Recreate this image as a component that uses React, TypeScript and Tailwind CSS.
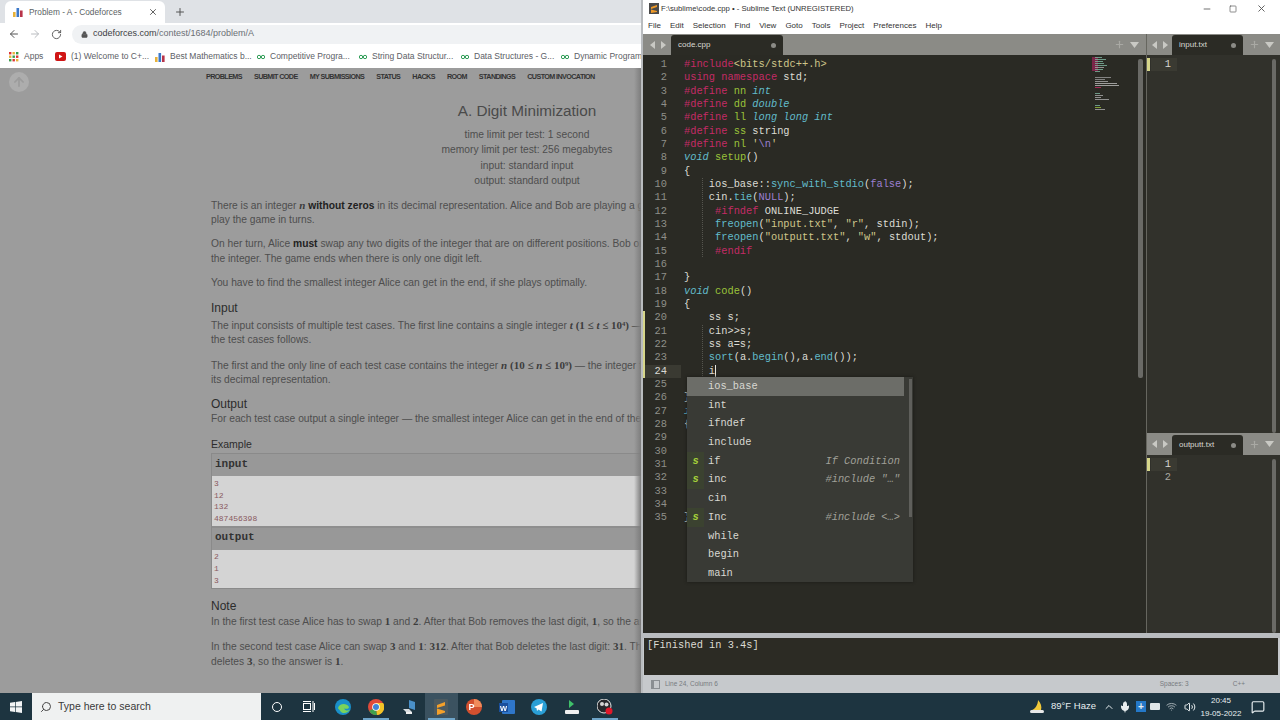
import React from "react";
import { ArrowLeft, ArrowRight, RotateCw, Lock, Plus, X, Minus, Square, Search, ChevronUp, Mic, Volume2, Wifi, MessageSquare, ArrowUp } from "lucide-react";

const P = "text-[#c42a66]";
const G = "text-[#9ac23a]";
const C = "text-[#62bccb] italic";
const F = "text-[#62bccb]";
const W = "text-[#dcdcd4]";
const Y = "text-[#cfc68a]";
const V = "text-[#9a7fd0]";

type T = [string, string];
const code: T[][] = [
  [["#include", P], ["<bits/stdc++.h>", Y]],
  [["using namespace", P], [" std;", W]],
  [["#define ", P], ["nn ", G], ["int", C]],
  [["#define ", P], ["dd ", G], ["double", C]],
  [["#define ", P], ["ll ", G], ["long long int", C]],
  [["#define ", P], ["ss ", G], ["string", W]],
  [["#define ", P], ["nl ", G], ["'", Y], ["\\n", V], ["'", Y]],
  [["void", C], [" setup", G], ["()", W]],
  [["{", W]],
  [["    ios_base::", W], ["sync_with_stdio", F], ["(", W], ["false", V], [");", W]],
  [["    cin.", W], ["tie", F], ["(", W], ["NULL", V], [");", W]],
  [["     #ifndef", P], [" ONLINE_JUDGE", W]],
  [["     ", W], ["freopen", F], ["(", W], ['"input.txt"', Y], [", ", W], ['"r"', Y], [", stdin);", W]],
  [["     ", W], ["freopen", F], ["(", W], ['"outputt.txt"', Y], [", ", W], ['"w"', Y], [", stdout);", W]],
  [["     #endif", P]],
  [],
  [["}", W]],
  [["void", C], [" code", G], ["()", W]],
  [["{", W]],
  [["    ss s;", W]],
  [["    cin>>s;", W]],
  [["    ss a=s;", W]],
  [["    ", W], ["sort", F], ["(a.", W], ["begin", F], ["(),a.", W], ["end", F], ["());", W]],
  [["    i", W]],
  [],
  [["}", W]],
  [["int", C], [" main()", W]],
  [["{", W]],
  [],
  [],
  [],
  [],
  [],
  [],
  [["}", W]],
];

const suggestions: [string, string, string][] = [
  ["ios_base", "", ""],
  ["int", "", ""],
  ["ifndef", "", ""],
  ["include", "", ""],
  ["if", "If Condition", "s"],
  ["inc", '#include "…"', "s"],
  ["cin", "", ""],
  ["Inc", "#include <…>", "s"],
  ["while", "", ""],
  ["begin", "", ""],
  ["main", "", ""],
];

const Arrows = () => (
  <svg width="16" height="8" viewBox="0 0 16 8" className="shrink-0">
    <path d="M5 0v8L0 4z M11 0v8l5-4z" fill="#c9c9c4" />
  </svg>
);

const TabEnd = () => (
  <div className="flex items-center gap-[5px] shrink-0">
    <Plus size={11} strokeWidth={2.5} className="text-[#a9a9a4]" />
    <svg width="9" height="6" viewBox="0 0 9 6"><path d="M0 0h9L4.500 6z" fill="#c9c9c4" /></svg>
  </div>
);

const Tab = ({ label, w }: { label: string; w: string }) => (
  <div className={`h-[20px] self-end rounded-t-[3px] bg-[#2b2b25] flex items-center justify-between pl-[7px] pr-[7px] text-[8px] text-[#d8d8d2] ${w}`}>
    <span>{label}</span>
    <span className="w-[5px] h-[5px] rounded-full bg-[#8b8b86]" />
  </div>
);

const Sans = "font-['Liberation_Sans',Arial,sans-serif]";

const L = ({ children }: { children: React.ReactNode }) => (
  <div className="h-[14.5px] leading-[14.5px] whitespace-nowrap">{children}</div>
);
const M = ({ children }: { children: React.ReactNode }) => (
  <span className="font-['Liberation_Serif',serif] font-bold italic text-[#3c3c3c] text-[11px]">{children}</span>
);
const N = ({ children }: { children: React.ReactNode }) => (
  <span className="font-['Liberation_Serif',serif] font-bold text-[#3c3c3c] text-[11px]">{children}</span>
);
const H = ({ children, className }: { children: React.ReactNode; className: string }) => (
  <div className={`h-[16px] leading-[16px] text-[12px] font-medium text-[#2c2c2c] ${className}`}>{children}</div>
);

const Mark = ({ color }: { color: string }) => (
  <svg width="8" height="8" viewBox="0 0 8 8" className="shrink-0">
    <circle cx="2" cy="4" r="1.700" fill="none" stroke={color} strokeWidth="1" />
    <circle cx="6" cy="4" r="1.700" fill="none" stroke={color} strokeWidth="1" />
  </svg>
);

const Bars = () => (
  <svg width="10" height="10" viewBox="0 0 10 10" className="shrink-0">
    <rect x="0" y="5" width="2.600" height="5" fill="#e8b23a" />
    <rect x="3.500" y="1" width="2.600" height="9" fill="#3b78c9" />
    <rect x="7" y="3.500" width="2.600" height="6.500" fill="#b8344a" />
  </svg>
);

const Bookmark = ({ icon, text, w }: { icon: React.ReactNode; text: string; w: string }) => (
  <div className={`flex items-center gap-[5px] shrink-0 ${w}`}>
    {icon}
    <span className="whitespace-nowrap text-[8.500px] text-[#5c6066]">{text}</span>
  </div>
);

function Chrome() {
  return (
    <div className={`w-[641px] h-full flex flex-col overflow-hidden relative bg-[#9c9c9c] ${Sans}`}>
      <div className="h-[23px] bg-[#dfe2e6] flex items-end pl-[5px] shrink-0">
        <div className="w-[160px] h-[22px] bg-white rounded-t-[6px] flex items-center pl-[8px] pr-[7px] gap-[6px]">
          <Bars />
          <span className="text-[8.300px] text-[#5c5f64] flex-1 whitespace-nowrap">Problem - A - Codeforces</span>
          <X size={10} className="text-[#444]" />
        </div>
        <Plus size={12} className="text-[#555] ml-[9px] mb-[5px]" />
      </div>
      <div className="h-[22px] bg-white flex items-center pl-[8px] shrink-0">
        <ArrowLeft size={12} className="text-[#555]" />
        <ArrowRight size={12} className="text-[#b9bcc0] ml-[9px]" />
        <RotateCw size={11} className="text-[#555] ml-[10px]" />
        <div className="ml-[10px] flex-1 h-[19px] bg-[#f0f2f4] rounded-l-full flex items-center pl-[9px] gap-[5px]">
          <Lock size={7} fill="#555" className="text-[#555]" />
          <span className="text-[9px] text-[#3c4043]">codeforces.com<span className="text-[#6b6f74]">/contest/1684/problem/A</span></span>
        </div>
      </div>
      <div className="h-[23px] bg-white flex items-center pl-[9px] shrink-0 overflow-hidden">
        <Bookmark
          w="w-[46px]"
          icon={
            <svg width="10" height="10" viewBox="0 0 10 10" className="shrink-0">
              {[0, 1, 2].flatMap((r) =>
                [0, 1, 2].map((c) => (
                  <rect key={`${r}${c}`} x={c * 3.500} y={r * 3.500} width="2.400" height="2.400" fill={["#d33", "#e8b23a", "#3a9a4a"][(r + c) % 3]} />
                ))
              )}
            </svg>
          }
          text="Apps"
        />
        <Bookmark
          w="w-[100px]"
          icon={
            <svg width="11" height="9" viewBox="0 0 11 9" className="shrink-0">
              <rect width="11" height="9" rx="2" fill="#d01515" />
              <path d="M4 2.500v4l3.500-2z" fill="#fff" />
            </svg>
          }
          text="(1) Welcome to C+..."
        />
        <Bookmark w="w-[102px]" icon={<Bars />} text="Best Mathematics b..." />
        <Bookmark w="w-[102px]" icon={<Mark color="#2f9e57" />} text="Competitive Progra..." />
        <Bookmark w="w-[102px]" icon={<Mark color="#2f9e57" />} text="String Data Structur..." />
        <Bookmark w="w-[100px]" icon={<Mark color="#2f9e57" />} text="Data Structures - G..." />
        <Bookmark w="w-[100px]" icon={<Mark color="#2f9e57" />} text="Dynamic Programming" />
      </div>

      <div className="flex-1 text-[10.250px] text-[#4e4e4e] relative">
        <div className="absolute left-[9px] top-[4px] w-[20px] h-[20px] rounded-full bg-[#adadad] flex items-center justify-center">
          <ArrowUp size={14} strokeWidth={3} className="text-[#9c9c9c]" />
        </div>
        <div className="h-[18px] pl-[206px] flex items-center gap-[12px] text-[7.200px] tracking-[-0.6px] font-bold text-[#333] whitespace-nowrap">
          {["PROBLEMS", "SUBMIT CODE", "MY SUBMISSIONS", "STATUS", "HACKS", "ROOM", "STANDINGS", "CUSTOM INVOCATION"].map((x) => (
            <span key={x}>{x}</span>
          ))}
        </div>
        <div className="ml-[211px] w-[632px]">
          <div className="mt-[13px] h-[24px] leading-[24px] text-center text-[15.300px] text-[#4a4a4a]">A. Digit Minimization</div>
          <div className="mt-[3.500px] text-center">
            {["time limit per test: 1 second", "memory limit per test: 256 megabytes", "input: standard input", "output: standard output"].map((x) => (
              <div key={x} className="h-[15.500px] leading-[15.500px]">{x}</div>
            ))}
          </div>
          <div className="mt-[9.500px]">
            <L>There is an integer <M>n</M> <b className="text-[#222]">without zeros</b> in its decimal representation. Alice and Bob are playing a game with this integer. They</L>
            <L>play the game in turns.</L>
          </div>
          <div className="mt-[10px]">
            <L>On her turn, Alice <b className="text-[#222]">must</b> swap any two digits of the integer that are on different positions. Bob on his turn always removes the last digit of</L>
            <L>the integer. The game ends when there is only one digit left.</L>
          </div>
          <div className="mt-[10px]">
            <L>You have to find the smallest integer Alice can get in the end, if she plays optimally.</L>
          </div>
          <H className="mt-[9.500px]">Input</H>
          <div className="mt-[2px]">
            <L>The input consists of multiple test cases. The first line contains a single integer <M>t</M> <N>(1 ≤ <i>t</i> ≤ 10⁴)</N> — the number of test cases. Description of</L>
            <L>the test cases follows.</L>
          </div>
          <div className="mt-[11px]">
            <L>The first and the only line of each test case contains the integer <M>n</M> <N>(10 ≤ <i>n</i> ≤ 10⁹)</N> — the integer for the game. <M>n</M> does not have zeros in</L>
            <L>its decimal representation.</L>
          </div>
          <H className="mt-[9px]">Output</H>
          <L>For each test case output a single integer — the smallest integer Alice can get in the end of the game.</L>
          <H className="mt-[9.500px] !text-[10.500px]">Example</H>
          <div className="mt-[1px] border border-[#8a8a8a] font-['Liberation_Mono',monospace]">
            <div className="h-[22px] leading-[20px] bg-[#989898] pl-[3px] text-[11px] font-bold text-[#333]">input</div>
            <div className="h-[50px] bg-[#d4d4d4] pl-[2px] pt-[2px] text-[8px] leading-[11.700px] text-[#8a5a60]">
              <div>3</div><div>12</div><div>132</div><div>487456398</div>
            </div>
            <div className="h-[2px] bg-[#8e8e8e]" />
            <div className="h-[22px] leading-[19px] bg-[#989898] pl-[3px] text-[11px] font-bold text-[#333]">output</div>
            <div className="h-[38px] bg-[#d4d4d4] pl-[2px] pt-[1px] text-[8px] leading-[12px] text-[#8a5a60]">
              <div>2</div><div>1</div><div>3</div>
            </div>
          </div>
          <H className="mt-[9px]">Note</H>
          <L>In the first test case Alice has to swap <N>1</N> and <N>2</N>. After that Bob removes the last digit, <N>1</N>, so the answer is <N>2</N>.</L>
          <div className="mt-[10.500px]">
            <L>In the second test case Alice can swap <N>3</N> and <N>1</N>: <N>312</N>. After that Bob deletes the last digit: <N>31</N>. Then Alice swaps <N>3</N> and <N>1</N>: <N>13</N> and Bob</L>
            <L>deletes <N>3</N>, so the answer is <N>1</N>.</L>
          </div>
        </div>
      </div>
      <div className="absolute right-0 top-[68px] bottom-0 w-[7px] bg-gradient-to-r from-transparent to-[#7d7d7d]" />
    </div>
  );
}

function Editor() {
  return (
    <div className="flex-1 relative bg-[#2a2a24] overflow-hidden pt-[3px] font-['Liberation_Mono',monospace] text-[10.350px]">
      {code.map((line, i) => {
        const n = i + 1;
        const active = n === 24;
        return (
          <div key={n} className="h-[13.340px] leading-[13.340px] flex relative whitespace-pre">
            {n >= 20 && n <= 24 && <div className="absolute left-0 top-0 bottom-0 w-[2px] bg-[#d6d68a]" />}
            <div className={`w-[38px] shrink-0 pr-[14px] text-right ${active ? "bg-[#3a3a32] text-[#d8d8d2]" : "text-[#8e8f89]"}`}>{n}</div>
            <div className="pl-[3px]">
              {line.map(([t, c], j) => (
                <span key={j} className={c}>{t}</span>
              ))}
              {active && <span className="inline-block w-[1px] h-[12px] bg-[#e8e8e0] align-middle" />}
            </div>
          </div>
        );
      })}
      <div className="absolute left-[59px] top-[123px] h-[79px] border-l border-dotted border-[#55554e]" />
      <div className="absolute left-[59px] top-[270px] h-[65px] border-l border-dotted border-[#55554e]" />

      {/* minimap */}
      <div className="absolute left-[449px] top-[2px] w-[6px] h-[14px] bg-[#7a2548]" />
      <div className="absolute left-[452px] top-[2px] w-[26px] flex flex-col gap-[1px] opacity-80">
        {[[1,7,"#7fb5a0"],[1,11,"#7fb5a0"],[1,8,"#7fb5a0"],[1,9,"#7fb5a0"],[1,12,"#7fb5a0"],[1,9,"#aaa"],[1,8,"#7fb5a0"],[1,5,"#7fb5a0"],[3,0,""],[1,16,"#999"],[1,10,"#999"],[1,13,"#aaa"],[1,22,"#bbb"],[1,24,"#bbb"],[1,6,"#c42a66"],[3,0,""],[1,5,"#7fb5a0"],[1,8,"#aaa"],[1,6,"#aaa"],[1,14,"#aaa"],[3,0,""],[1,5,"#7fb5a0"],[1,6,"#9ac23a"],[1,10,"#aaa"]].map(([h, w, c], i) => (
          <div key={i} style={{ height: Number(h), width: Number(w), background: String(c) }} />
        ))}
      </div>
      {/* scrollbar */}
      <div className="absolute left-[495px] top-[4px] w-[5px] h-[319px] rounded-[2px] bg-[#6a6a66]" />

      {/* autocomplete */}
      <div className="absolute left-[44px] top-[322px] w-[226px] h-[205px] bg-[#393a35] shadow-[0_0_3px_#1a1a16]">
        <div className="absolute right-[1px] top-[2px] w-[3px] h-[138px] bg-[#5f5f5b]" />
        {suggestions.map(([name, hint, s], i) => (
          <div key={name} className={`h-[18.700px] leading-[18.700px] w-[217px] flex items-center pl-[21px] relative whitespace-pre text-[#d8d8d2] ${i === 0 ? "bg-[#6c6d68]" : ""}`}>
            {s && (
              <span className="absolute left-0 top-0 bottom-0 w-[17px] bg-[#3b4230] text-center text-[#a6d33a] font-bold italic">s</span>
            )}
            <span className="flex-1">{name}</span>
            {hint && <span className="italic text-[#a0a098] pr-[4px]">{hint}</span>}
          </div>
        ))}
      </div>
    </div>
  );
}

const SidePane = ({ lines, className }: { lines: number; className: string }) => (
  <div className={`relative bg-[#31312b] pt-[3px] font-['Liberation_Mono',monospace] text-[10.350px] ${className}`}>
    {Array.from({ length: lines }, (_, i) => (
      <div key={i} className="h-[13.340px] leading-[13.340px] flex relative text-[#a8a8a2]">
        {i === 0 && <div className="absolute left-0 top-0 bottom-0 w-[3px] bg-[#d6d68a]" />}
        <div className={`w-[26px] ml-[4px] pr-[6px] text-right ${i === 0 ? "bg-[#3a3a32] text-[#d8d8d2]" : ""}`}>{i + 1}</div>
      </div>
    ))}
    <div className="absolute right-[4px] top-[4px] bottom-0 w-[4px] rounded-[2px] bg-[#6a6a66]" />
  </div>
);

function Sublime() {
  return (
    <div className={`flex-1 h-full flex flex-col bg-[#c6c9cc] border-l-2 border-[#b9bcbf] ${Sans}`}>
      <div className="h-[17px] bg-white flex items-center pl-[6px] shrink-0 relative">
        <svg width="10" height="11" viewBox="0 0 10 11" className="shrink-0">
          <rect width="10" height="11" fill="#4a4a4a" />
          <path d="M2 4l6-2v2L2 6zM2 6.500l6 1.500v1L2 10z" fill="#f09a28" />
        </svg>
        <span className="ml-[2px] text-[7.700px] text-[#333] whitespace-nowrap">F:\sublime\code.cpp • - Sublime Text (UNREGISTERED)</span>
        <div className="ml-auto flex items-center text-[#555]">
          <Minus size={10} className="mr-[17px]" />
          <Square size={8} className="mr-[19px]" />
          <X size={11} className="mr-[13px]" />
        </div>
      </div>
      <div className="h-[17px] bg-white flex items-center pl-[5px] gap-[9px] text-[8px] text-[#333] shrink-0">
        {["File", "Edit", "Selection", "Find", "View", "Goto", "Tools", "Project", "Preferences", "Help"].map((x) => (
          <span key={x}>{x}</span>
        ))}
      </div>
      <div className="flex flex-1 min-h-0">
        <div className="w-[503px] flex flex-col shrink-0">
          <div className="h-[21px] bg-[#8b8b86] flex items-center pl-[7px] pr-[7px] shrink-0">
            <Arrows />
            <div className="ml-[5px] self-end"><Tab label="code.cpp" w="w-[112px]" /></div>
            <div className="ml-auto"><TabEnd /></div>
          </div>
          <Editor />
        </div>
        <div className="flex-1 flex flex-col border-l border-[#66665f]">
          <div className="h-[21px] bg-[#8b8b86] flex items-center pl-[5px] pr-[6px] shrink-0">
            <Arrows />
            <div className="ml-[4px] self-end"><Tab label="input.txt" w="w-[71px]" /></div>
            <div className="ml-auto"><TabEnd /></div>
          </div>
          <SidePane lines={1} className="h-[378px]" />
          <div className="h-[22px] bg-[#8b8b86] flex items-center pl-[5px] pr-[6px] shrink-0">
            <Arrows />
            <div className="ml-[4px] self-end"><Tab label="outputt.txt" w="w-[71px]" /></div>
            <div className="ml-auto"><TabEnd /></div>
          </div>
          <SidePane lines={2} className="flex-1" />
        </div>
      </div>
      <div className="h-[5px] bg-[#b9bcbf] shrink-0" />
      <div className="h-[37px] bg-[#2c2b24] mx-[1px] mr-[2px] pl-[3px] pt-[1px] font-['Liberation_Mono',monospace] text-[10.350px] leading-[12px] text-[#dcdcd4] shrink-0">[Finished in 3.4s]</div>
      <div className="h-[18px] flex items-center pl-[8px] text-[6.500px] text-[#777b80] shrink-0 relative">
        <span className="w-[9px] h-[9px] border border-[#8a8e92] border-l-[3px] mr-[5px]" />
        <span>Line 24, Column 6</span>
        <span className="ml-auto mr-[44px]">Spaces: 3</span>
        <span className="mr-[35px]">C++</span>
      </div>
    </div>
  );
}

const TI = ({ children, active, under }: { children: React.ReactNode; active?: boolean; under?: boolean }) => (
  <div className={`w-[32.700px] h-full flex items-center justify-center relative shrink-0 ${active ? "bg-[#3b5260]" : ""}`}>
    {children}
    {under && <div className="absolute bottom-0 left-[3px] right-[3px] h-[2px] bg-[#6ea4c8]" />}
  </div>
);

function Taskbar() {
  return (
    <div className={`h-[27px] bg-[#1d3440] flex items-center shrink-0 ${Sans}`}>
      <div className="w-[32px] flex justify-center">
        <svg width="12" height="12" viewBox="0 0 12 12">
          <path d="M0 1.700l5-.7v4.600H0zM5.700.9L12 0v5.600H5.700zM0 6.300h5v4.700l-5-.7zM5.700 6.300H12V12l-6.300-.9z" fill="#f2f4f5" />
        </svg>
      </div>
      <div className="w-[229px] h-full bg-[#eff1f1] flex items-center pl-[8px] gap-[6px]">
        <Search size={12} className="text-[#444] -scale-x-100" />
        <span className="text-[10.500px] text-[#3a3a3a]">Type here to search</span>
      </div>
      <div className="w-[32px] flex justify-center"><div className="w-[10px] h-[10px] rounded-full border-[1.500px] border-white" /></div>
      <div className="w-[32px] flex justify-center">
        <svg width="12" height="11" viewBox="0 0 12 11" fill="none" stroke="#fff"><rect x="0.500" y="2.500" width="7" height="6" /><path d="M0 .5h8M0 10.500h8M10 0v11M11.500 2v7" /></svg>
      </div>
      <div className="h-full flex items-center ml-[2px]">
        <TI>
          <svg width="16" height="16" viewBox="0 0 16 16">
            <circle cx="8" cy="8" r="8" fill="#1a8fc9" />
            <path d="M3 9c1-4 8-6 11-1 0 2-3 2-5 1.500 1 2 4 3 6 1-2 4-8 5-10 1-1-1-2-2-2-2.500z" fill="#7ad35c" />
          </svg>
        </TI>
        <TI under>
          <svg width="16" height="16" viewBox="0 0 16 16">
            <circle cx="8" cy="8" r="8" fill="#e04a3a" />
            <path d="M8 8L1.200 12A8 8 0 0 0 9 16z" fill="#3fa24e" />
            <path d="M8 4h7.200A8 8 0 0 1 9 16z" fill="#f3c327" />
            <circle cx="8" cy="8" r="3.800" fill="#fff" />
            <circle cx="8" cy="8" r="3" fill="#3f84d6" />
          </svg>
        </TI>
        <TI>
          <svg width="16" height="16" viewBox="0 0 16 16">
            <path d="M8 1l6 2v8L8 9z" fill="#4a90c8" />
            <path d="M2 10l6 0 3 3H5z" fill="#d8dde0" />
            <rect x="5" y="13" width="6" height="2" fill="#f0f0f0" />
          </svg>
        </TI>
        <TI active under>
          <svg width="14" height="16" viewBox="0 0 14 16">
            <rect width="14" height="16" rx="1" fill="#4c5a60" />
            <path d="M3 6l8-3v3.500L3 9zM3 9.500l8 2.500v1.500L3 16z" fill="#f4a02a" />
          </svg>
        </TI>
        <TI>
          <svg width="16" height="16" viewBox="0 0 16 16">
            <circle cx="8" cy="8" r="8" fill="#d2502f" />
            <path d="M8 0a8 8 0 0 1 8 8H8z" fill="#f08b5b" />
            <text x="2.500" y="11" fontSize="9" fontWeight="700" fill="#fff" fontFamily="Liberation Sans">P</text>
          </svg>
        </TI>
        <TI>
          <svg width="16" height="16" viewBox="0 0 16 16">
            <rect x="3" y="1" width="13" height="14" rx="1" fill="#2f76c9" />
            <rect x="0" y="4" width="9" height="9" fill="#1a4f9c" />
            <text x="1" y="11.500" fontSize="7.500" fontWeight="700" fill="#fff" fontFamily="Liberation Sans">W</text>
          </svg>
        </TI>
        <TI>
          <svg width="16" height="16" viewBox="0 0 16 16">
            <circle cx="8" cy="8" r="8" fill="#2a9fd6" />
            <path d="M3 8l9-4-1.500 8.500-3-2-1.500 1.500-.5-2.700z" fill="#fff" />
          </svg>
        </TI>
        <TI>
          <svg width="16" height="16" viewBox="0 0 16 16">
            <path d="M5 1l5 4-5 4z" fill="#3fc06a" />
            <rect x="1" y="11" width="14" height="4" rx="1" fill="#f0f0f0" />
          </svg>
        </TI>
        <TI under>
          <svg width="16" height="16" viewBox="0 0 16 16">
            <circle cx="7" cy="7" r="7" fill="#26282c" stroke="#e4e4e4" />
            <circle cx="5" cy="5" r="2" fill="#d5d5d5" />
            <circle cx="9.500" cy="5.500" r="2" fill="#d5d5d5" />
            <circle cx="12" cy="12" r="3.500" fill="#e0182a" />
          </svg>
        </TI>
      </div>
      <div className="ml-auto flex items-center text-[#e8eef0] h-full">
        <svg width="16" height="14" viewBox="0 0 16 14">
          <path d="M9 0c3 3 4 7 3 10H3c3-1 6-5 6-10z" fill="#f1c93a" />
          <rect x="1" y="10" width="14" height="3" rx="1.500" fill="#e8e8e8" />
        </svg>
        <span className="ml-[6px] text-[9.500px] whitespace-nowrap w-[52px]">89°F Haze</span>
        <ChevronUp size={12} className="mr-[4px]" />
        <Mic size={12} className="mr-[5px]" fill="#e8eef0" />
        <div className="w-[10px] h-[11px] bg-[#2478c8] text-[10px] leading-[11px] text-center font-bold mr-[4px]">+</div>
        <div className="w-[10px] h-[7px] bg-[#dfe6e8] rounded-[1px] mr-[6px]" />
        <Wifi size={11} className="mr-[7px] opacity-70" />
        <Volume2 size={12} className="mr-[2px]" />
        <div className="w-[46px] text-center text-[8px] leading-[13px]">
          <div>20:45</div>
          <div>19-05-2022</div>
        </div>
        <MessageSquare size={14} className="ml-[7px] mr-[15px]" />
      </div>
    </div>
  );
}

export default function App() {
  return (
    <div className="w-[1280px] h-[720px] overflow-hidden flex flex-col blur-[0.5px]">
      <div className="flex flex-1 min-h-0">
        <Chrome />
        <Sublime />
      </div>
      <Taskbar />
    </div>
  );
}
